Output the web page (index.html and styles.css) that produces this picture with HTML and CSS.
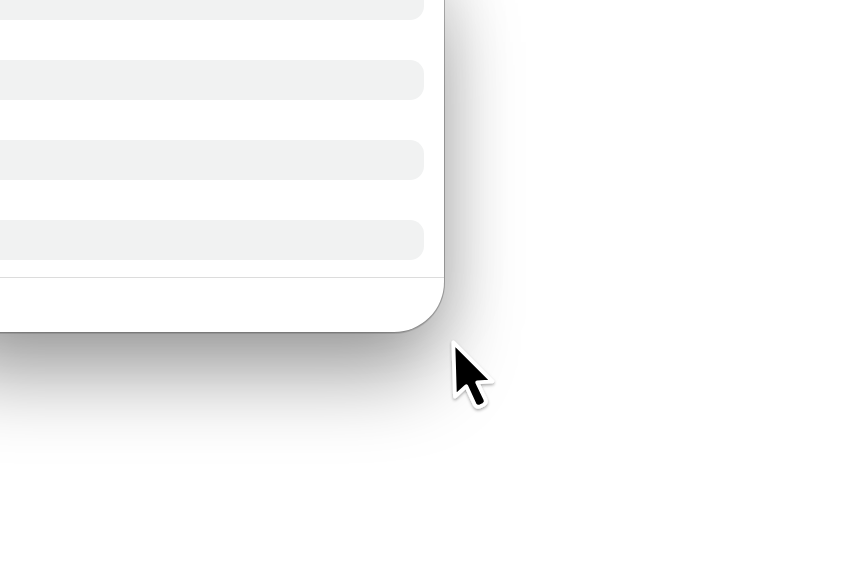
FILE: index.html
```html
<!DOCTYPE html>
<html>
<head>
<meta charset="utf-8">
<link rel="stylesheet" href="styles.css">
</head>
<body>
<div class="stage">
  <div class="card">
    <div class="list">
      <div class="row"></div>
      <div class="row"></div>
      <div class="row"></div>
      <div class="row"></div>
    </div>
    <div class="footer"></div>
  </div>
  <svg class="cursor" width="52" height="78" viewBox="0 0 48 72">
    <defs>
      <filter id="sh" x="-30%" y="-30%" width="160%" height="160%">
        <feDropShadow dx="0" dy="1.5" stdDeviation="1.5" flood-color="#000" flood-opacity="0.35"/>
      </filter>
    </defs>
    <path filter="url(#sh)" d="M4 4 L5.5 54 L16 44.5 L23.5 61 Q25.5 64.5 29 63 L32 61.5 Q35 59.5 33.5 56.5 L26 41 L40 40 Z" fill="#000" stroke="#fff" stroke-width="3.5" stroke-linejoin="round"/>
  </svg>
</div>
</body>
</html>
```
FILE: styles.css
```css
html, body {
  margin: 0;
  padding: 0;
  background: #ffffff;
  width: 846px;
  height: 566px;
  overflow: hidden;
}
.stage {
  position: relative;
  display: flow-root;
  width: 846px;
  height: 566px;
}
.card {
  width: 500px;
  margin-left: -56px;
  margin-top: -40px;
  background: #ffffff;
  border-radius: 0 0 50px 0;
  box-shadow: 0 0 0 1px rgba(0,0,0,0.16), 0 1px 0 1px rgba(0,0,0,0.12), 0 50px 80px -6px rgba(0,0,0,0.36), 10px 0 60px rgba(0,0,0,0.1);
  display: flex;
  flex-direction: column;
}
.list {
  display: flex;
  flex-direction: column;
  gap: 40px;
  padding: 20px 20px 17px 20px;
  border-bottom: 1px solid #dcdcdc;
}
.row {
  height: 40px;
  background: #f1f2f2;
  border-radius: 14px;
}
.footer {
  height: 54px;
}
.cursor {
  position: absolute;
  left: 449px;
  top: 338px;
}
```
